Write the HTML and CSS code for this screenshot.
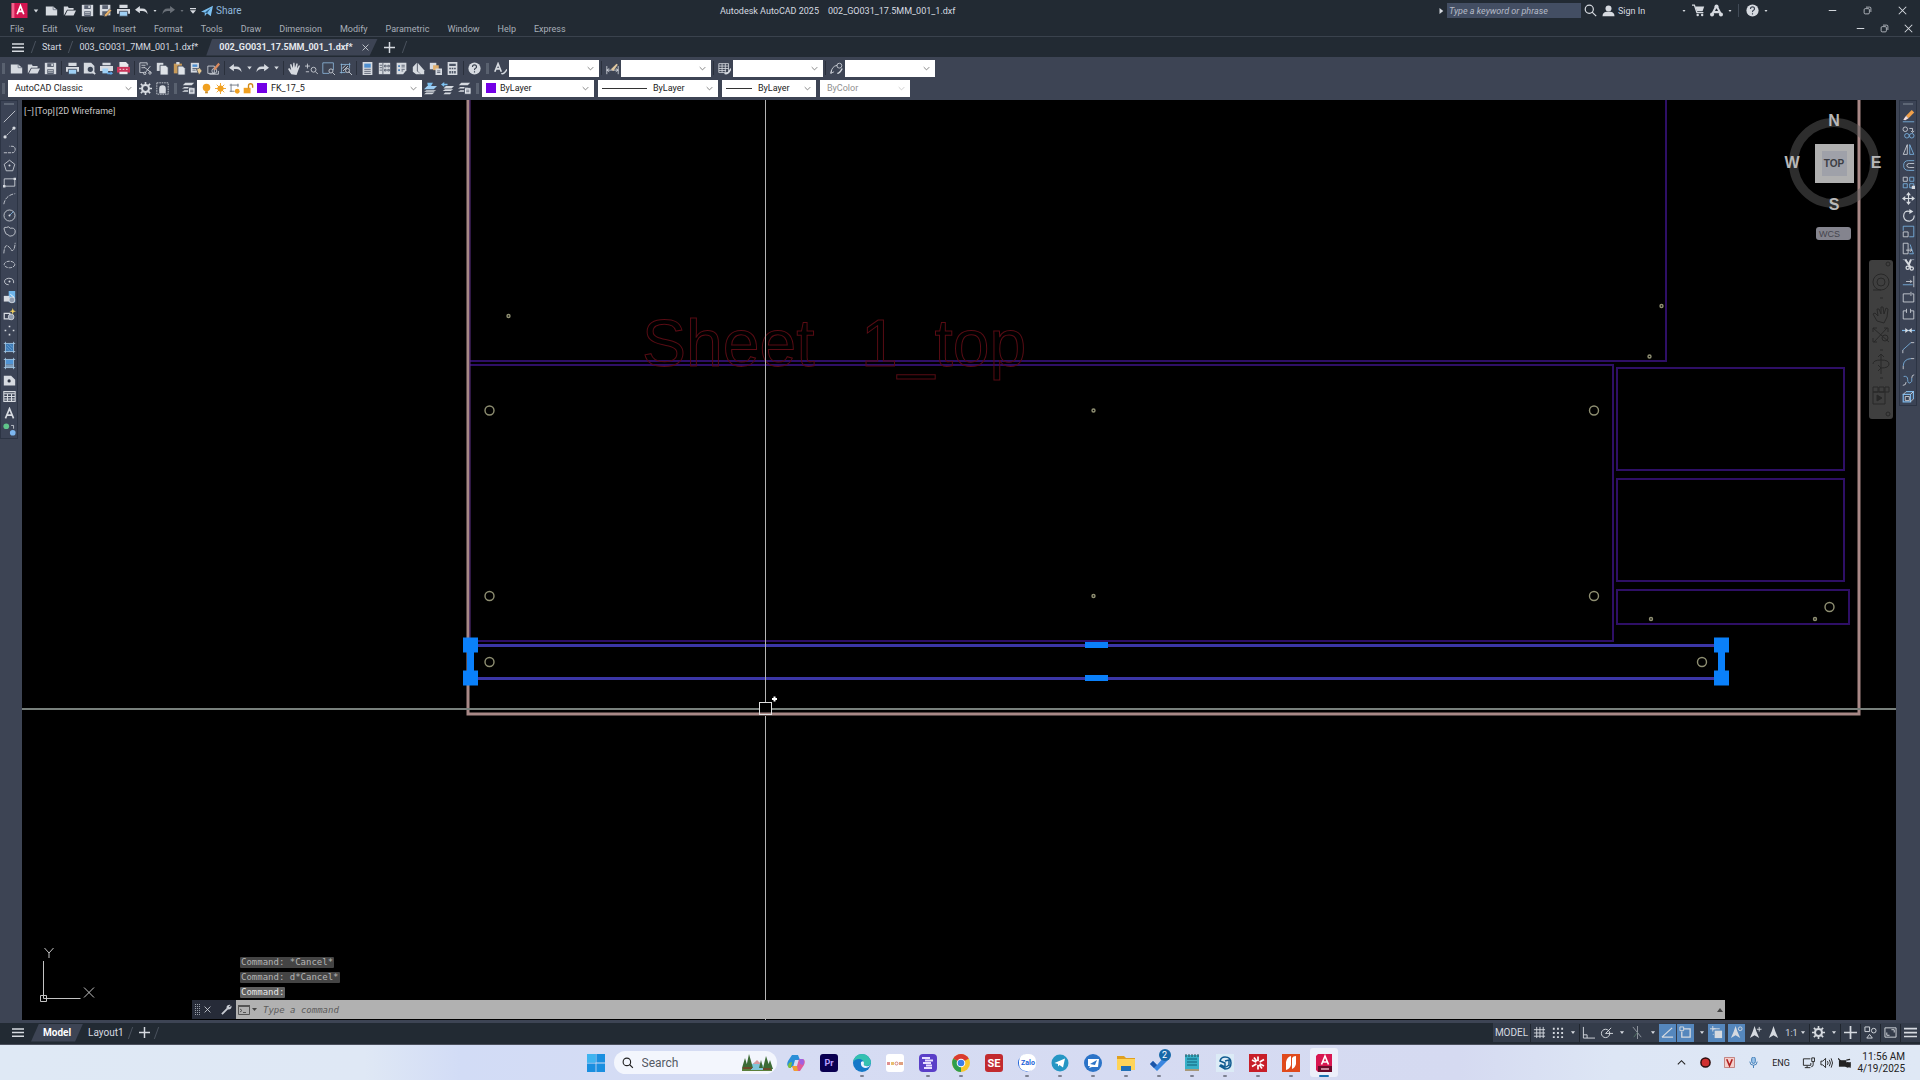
FILE: index.html
```html
<!DOCTYPE html>
<html lang="en">
<head>
  <meta charset="UTF-8">
  <meta name="viewport" content="width=device-width, initial-scale=1.0">
  <title>Autodesk AutoCAD 2025 - 002_GO031_17.5MM_001_1.dxf</title>
  <link rel="stylesheet" href="styles.css">
</head>
<body>

  <!-- Icon set -->
  <svg class="icon-defs" aria-hidden="true">
    <symbol id="i-new" viewBox="0 0 16 16"><path class="f" d="M1 3h9l5 4v7H1z"/><path d="M10 3v4h5" fill="none" stroke="#6b7383"/></symbol>
    <symbol id="i-open" viewBox="0 0 16 16"><path class="f" d="M1 14V3h5l1 2h6v2H5z"/><path class="f" d="M5.500 8H16l-3 6H2.500z"/></symbol>
    <symbol id="i-save" viewBox="0 0 16 16"><path class="f" d="M1 1h14v14H1z"/><path d="M4 1.500h8V6H4zM4 9h8v6H4z" fill="#5a6272"/><path class="f" d="M5 10h6v1H5zM5 12h6v1H5zM9 2h2v3H9z"/></symbol>
    <symbol id="i-saveas" viewBox="0 0 16 16"><path class="f" d="M1 1h13v13H1z"/><path d="M4 1.500h7V6H4zM4 9h6v5H4z" fill="#5a6272"/><path d="M7 13l6-7 2.500 2-6 7-3 .8z" fill="#e9b36a" stroke="#30394a" stroke-width=".6"/></symbol>
    <symbol id="i-print" viewBox="0 0 16 16"><path class="f" d="M3 1h10v4H3zM0 6h16v6H0z"/><path d="M3 9h10v6H3z" fill="#9fd0f5" stroke="#3a4456"/></symbol>
    <symbol id="i-preview" viewBox="0 0 16 16"><path class="f" d="M1 1h9l4 4v9H1z"/><circle cx="9" cy="9" r="4" fill="#3b4556" stroke="#cfd5dd" stroke-width="1.500"/><path class="s" d="M12 12l3 3" stroke-width="2"/></symbol>
    <symbol id="i-publish" viewBox="0 0 16 16"><path class="f" d="M3 1h10v3H3zM0 5h16v6H0z"/><path d="M3 8h7v6H3z" fill="#9fd0f5"/><path d="M9 13h4v-2l3 3-3 2v-1H9z" fill="#61a8e8"/></symbol>
    <symbol id="i-pdf" viewBox="0 0 16 16"><path d="M3 0h8l3 3v4H3z" fill="#e8e8ec"/><path d="M0 6h16v7H0z" fill="#c8355a"/><path d="M3 12h10v3H3z" fill="#e8e8ec"/><path d="M3 9h2M7 9h2M11 9h2" stroke="#fff"/></symbol>
    <symbol id="i-cut" viewBox="0 0 16 16"><path d="M1 1h9v3M1 1v12h5" class="s"/><path class="s" d="M3 4h5M3 7h4M6 6l9 7M14 5l-7 9"/><circle class="s" cx="13.500" cy="13.500" r="1.500"/><circle class="s" cx="7" cy="14" r="1.500"/></symbol>
    <symbol id="i-copy" viewBox="0 0 16 16"><path class="f" d="M1 1h8v10H1z"/><path d="M5 4h7l3 3v9H5z" fill="#dfe3e8" stroke="#3b4556"/></symbol>
    <symbol id="i-paste" viewBox="0 0 16 16"><path d="M1 2h10v12H1z" fill="#c89a58"/><path class="f" d="M4 0h4v3H4z"/><path d="M6 5h6l3 3v8H6z" fill="#dfe3e8" stroke="#3b4556"/></symbol>
    <symbol id="i-match" viewBox="0 0 16 16"><path class="f" d="M1 1h10v12H1z"/><path d="M3 3h6v3H3z" fill="#4f8fd0"/><path d="M3 8h6M3 10h4" stroke="#4a5364"/><path d="M8 9l4-2 3 4-4 5z" fill="#e8c890" stroke="#3b4556"/></symbol>
    <symbol id="i-block" viewBox="0 0 16 16"><path class="s" d="M1 5h8v9H1zM3 15h11v-4"/><circle class="s" cx="9" cy="11" r="3"/><path d="M8 8l6-7 2 2-6 7z" fill="#d98a5e"/></symbol>
    <symbol id="i-undo" viewBox="0 0 16 16"><path class="f" d="M0 7l6-4.500v3h3q6 0 6.500 7-2.500-4-6.500-4H6v3z"/></symbol>
    <symbol id="i-redo" viewBox="0 0 16 16"><path class="f" d="M16 7l-6-4.500v3H7Q1 5.500.5 12.500q2.500-4 6.500-4h3v3z"/></symbol>
    <symbol id="i-caret" viewBox="0 0 8 16"><path class="f" d="M1 6h6l-3 4z"/></symbol>
    <symbol id="i-more" viewBox="0 0 8 16"><path class="f" d="M0 4h8v1.500H0zM0 7h8l-4 4.500z"/></symbol>
    <symbol id="i-send" viewBox="0 0 16 16"><path d="M0 9l16-8-3 14-5-4-3 4v-5z" fill="#7cc0f0"/><path d="M5 10l8-6-5 7z" fill="#2a5f8c"/></symbol>
    <symbol id="i-pan" viewBox="0 0 16 16"><path class="f" d="M4 15L0 8.500l1.500-1L4 10 2.500 3l1.500-.5L6 7.500 6.500 1h1.500L8.500 7l2-5.500 1.500.5-1 6 2.500-4 1.300.7L12 12l-1.500 4z"/></symbol>
    <symbol id="i-zoomrt" viewBox="0 0 16 16"><path class="s" d="M0 5h6M3 2v6M1 12h4"/><circle class="s" cx="10.500" cy="9.500" r="3"/><path class="s" d="M13 12l3 3"/></symbol>
    <symbol id="i-zoomwin" viewBox="0 0 16 16"><path d="M1 1h13v9M1 1v13h8" fill="none" stroke="#8eb9dd"/><circle class="s" cx="11" cy="11" r="2.500"/><path class="s" d="M13 13l3 3"/></symbol>
    <symbol id="i-zoomprev" viewBox="0 0 16 16"><path d="M2 3h12M3 2v12M13 1v7M1 13h7" fill="none" stroke="#8eb9dd"/><path class="s" d="M4 8l4-4M5 11l6-6"/><circle class="s" cx="10.500" cy="10.500" r="2.500"/><path class="s" d="M12 12l4 4"/></symbol>
    <symbol id="i-props" viewBox="0 0 16 16"><path class="f" d="M2 0h12v16H2z"/><path d="M4 2h8v5H4z" fill="#4f8fd0"/><path d="M4 9h8M4 11.500h8M4 14h8" stroke="#4a5364"/></symbol>
    <symbol id="i-dc" viewBox="0 0 16 16"><path class="f" d="M1 1h14v14H1z"/><path d="M6 1v14M8 4h2v2H8zM12 4h2v2h-2zM8 9h2v2H8zM12 9h2v2h-2zM2 4h3M2 7h3M2 10h3" stroke="#4a5364" fill="none"/></symbol>
    <symbol id="i-palette" viewBox="0 0 16 16"><path class="f" d="M2 1h12v9l-4 5H2z"/><path d="M4 4h2v2H4zM4 9h2v2H4z" fill="#3a73b0"/><path d="M8 4h4M8 6h4M8 9h4M8 11h2" stroke="#4a5364"/></symbol>
    <symbol id="i-sheet" viewBox="0 0 16 16"><path class="f" d="M1 6l5-5v10l5 4H5L1 12z"/><path class="f" d="M7 1l8 9v5h-4L7 11z"/></symbol>
    <symbol id="i-markup" viewBox="0 0 16 16"><path class="f" d="M1 1h8v8H1z"/><path d="M5 4h7v6H5z" fill="#e0b070"/><path class="f" d="M8 8h8v8H8z"/><path d="M10 11h4M10 13h4" stroke="#4a5364"/></symbol>
    <symbol id="i-calc" viewBox="0 0 16 16"><path class="f" d="M2 0h12v16H2z"/><path d="M4 2h8v3H4zM4 7h2v2H4zM7 7h2v2H7zM10 7h2v2h-2zM4 11h2v3H4zM7 11h2v3H7zM10 11h2v3h-2z" fill="#4a5364"/></symbol>
    <symbol id="i-help" viewBox="0 0 16 16"><circle class="f" cx="8" cy="8" r="7.500"/><path d="M5.500 6q0-2.500 2.500-2.500T10.500 6q0 1-1.300 1.800T8 10M8 11.500v1.500" fill="none" stroke="#39414f" stroke-width="1.400"/></symbol>
    <symbol id="i-textstyle" viewBox="0 0 16 16"><path class="s" d="M1 12L5 2l4 10M2.500 8.500h5" stroke-width="2"/><path class="s" d="M9 14q3 2 7-5" stroke-width="1.800"/></symbol>
    <symbol id="i-dimstyle" viewBox="0 0 16 16"><path class="s" d="M1 5v10M15 5v10M1 10h14M4 8l-3 2 3 2M12 8l3 2-3 2"/><path d="M6 9l7-7 1.500 1.500L9 11z" fill="#e0c8a0"/></symbol>
    <symbol id="i-tablestyle" viewBox="0 0 16 16"><path class="s" d="M1 2h12v11H1zM1 5h12M1 8h12M1 10.500h9M5 2v11M9 2v11"/><path class="s" d="M8 14q4 2 8-6" stroke-width="2"/></symbol>
    <symbol id="i-leader" viewBox="0 0 16 16"><path class="s" d="M1 14Q2 5 9 4M1 14l1-4M1 14l4-2"/><circle class="s" cx="11.500" cy="4.500" r="3"/><path class="s" d="M9 14q3 0 6-6" stroke-width="1.800"/></symbol>
    <symbol id="i-gear" viewBox="0 0 16 16"><circle class="s" cx="8" cy="8" r="4.300" stroke-width="2.500"/><path class="s" d="M8 0v3M8 13v3M0 8h3M13 8h3M2.300 2.300l2.200 2.200M11.500 11.500l2.200 2.200M2.300 13.700l2.200-2.200M11.500 4.500l2.200-2.200" stroke-width="2"/></symbol>
    <symbol id="i-wssave" viewBox="0 0 16 16"><path d="M1 1h14v14H1z" fill="none" stroke="#d6dae0" stroke-dasharray="2 1"/><circle class="f" cx="8" cy="8" r="4"/><path class="f" d="M4 9h8v5H4z"/></symbol>
    <symbol id="i-layers" viewBox="0 0 16 16"><path class="f" d="M4 1h11l-3 3H1zM3 6h10l-2 2H0zM3 10h6l-1 2H0z"/><path d="M8 7h8v8H8z" fill="#e6e9ee" stroke="#3b4556"/><path d="M10 10h4M10 12h4" stroke="#4a5364"/></symbol>
    <symbol id="i-laycur" viewBox="0 0 16 16"><path d="M4 1h7l-3 5H5z" fill="#7cc0f0"/><path d="M4 5h12l-4 4H0z" fill="#9cccf2"/><path class="f" d="M3 10h12l-3 2H0zM3 13h10l-3 2H0z"/></symbol>
    <symbol id="i-layprev" viewBox="0 0 16 16"><path d="M0 3l4-3v2h4v2H4v2z" fill="#7cc0f0"/><path class="f" d="M6 5h10l-3 3H3zM5 9h10l-3 2H2zM5 13h8l-2 2H3z"/></symbol>
    <symbol id="i-bulb" viewBox="0 0 16 16"><circle cx="8" cy="6.500" r="5.500" fill="#f0a020"/><path d="M6 12h4v3H6z" fill="#c88820"/></symbol>
    <symbol id="i-sun" viewBox="0 0 16 16"><circle cx="8" cy="8" r="4.500" fill="#f0a020"/><path d="M8 0v16M0 8h16M2.500 2.500l11 11M13.500 2.500l-11 11" stroke="#f0a020" stroke-width="1.300"/></symbol>
    <symbol id="i-vpfreeze" viewBox="0 0 16 16"><path d="M3 1v12M1 3h13M13 1v5M1 12h7" fill="none" stroke="#6c7480" stroke-width="1.300"/><circle cx="12" cy="12" r="3.500" fill="#f0a020"/></symbol>
    <symbol id="i-unlock" viewBox="0 0 16 16"><path d="M1 7h10v8H1z" fill="#f0a020"/><path d="M8 8V4q0-3 3-3t3 3v3" fill="none" stroke="#d08a18" stroke-width="2"/></symbol>
    <symbol id="i-chevron" viewBox="0 0 10 6"><path d="M1 1l4 4 4-4" fill="none" stroke="currentColor"/></symbol>
    <symbol id="i-close" viewBox="0 0 12 12"><path class="s" d="M1 1l10 10M11 1L1 11" stroke-width="1.400"/></symbol>
    <symbol id="i-min" viewBox="0 0 12 12"><path class="s" d="M1 6h10" stroke-width="1.300"/></symbol>
    <symbol id="i-restore" viewBox="0 0 12 12"><rect class="s" x="1.500" y="3.500" width="7" height="7" rx="1.500"/><path class="s" d="M4 1.500h5q1.500 0 1.500 1.500v5"/></symbol>
    <symbol id="i-burger" viewBox="0 0 14 12"><path class="f" d="M0 1h14v1.800H0zM0 5.200h14V7H0zM0 9.400h14v1.800H0z"/></symbol>
    <symbol id="i-plus" viewBox="0 0 12 12"><path class="s" d="M6 0v12M0 6h12" stroke-width="1.600"/></symbol>
    <symbol id="i-search" viewBox="0 0 16 16"><circle class="s" cx="6.500" cy="6.500" r="5" stroke-width="1.500"/><path class="s" d="M10 10l5 5" stroke-width="1.500"/></symbol>
    <symbol id="i-user" viewBox="0 0 16 16"><circle class="f" cx="8" cy="4.500" r="4"/><path class="f" d="M0 15q0-5 5-6h6q5 1 5 6z"/></symbol>
    <symbol id="i-cart" viewBox="0 0 16 16"><path class="s" d="M0 1.500h3l3 9h8" stroke-width="1.500"/><path class="f" d="M4 3h11l-2 6H6z"/><circle class="f" cx="7" cy="13.500" r="1.500"/><circle class="f" cx="12.500" cy="13.500" r="1.500"/></symbol>
    <symbol id="i-apps" viewBox="0 0 16 16"><path class="s" d="M8 2L2.500 13M8 2l5.500 11M4 10h8" stroke-width="2.600"/><circle class="f" cx="8" cy="3" r="2.500"/><circle class="f" cx="2.500" cy="13" r="2.500"/><circle class="f" cx="13.500" cy="13" r="2.500"/></symbol>

    <!-- Draw toolbar -->
    <symbol id="d-line" viewBox="0 0 16 16"><path class="s" d="M1 15L15 1"/></symbol>
    <symbol id="d-xline" viewBox="0 0 16 16"><path class="s" d="M2 14L14 2" stroke-dasharray="3 1"/><circle class="f" cx="2.500" cy="13.500" r="2"/><circle class="f" cx="13.500" cy="2.500" r="2"/></symbol>
    <symbol id="d-pline" viewBox="0 0 16 16"><path class="s" d="M1 12h10q4 0 4-4t-4-4H8" stroke-dasharray="4 1"/></symbol>
    <symbol id="d-polygon" viewBox="0 0 16 16"><path class="s" d="M8 1.500l6.500 5-2.500 8H4l-2.500-8z"/><circle class="f" cx="8" cy="8" r="1.200"/></symbol>
    <symbol id="d-rect" viewBox="0 0 16 16"><path class="s" d="M1.500 3.500h13v9h-13z"/><path class="f" d="M0 11h3v3H0zM13 2h3v3h-3z"/></symbol>
    <symbol id="d-arc" viewBox="0 0 16 16"><path class="s" d="M1 15Q3 4 15 2" stroke-dasharray="5 1.500"/></symbol>
    <symbol id="d-circle" viewBox="0 0 16 16"><circle class="s" cx="8" cy="8" r="6.800"/><path d="M8 8l5-5" stroke="#7db7e8" fill="none"/><circle class="f" cx="8" cy="8" r="1.200"/></symbol>
    <symbol id="d-cloud" viewBox="0 0 16 16"><path class="s" d="M2 7Q0 2 4 3q3-2 5 1 5-1 6 3 1 4-3 6-4 2-6-1-3 0-4-5z"/></symbol>
    <symbol id="d-spline" viewBox="0 0 16 16"><path class="s" d="M1 14Q2 2 6 5t4 5q4 3 5-9" stroke-dasharray="5 1"/></symbol>
    <symbol id="d-ellipse" viewBox="0 0 16 16"><ellipse class="s" cx="8" cy="8" rx="6.500" ry="4" stroke-dasharray="4 1.200"/></symbol>
    <symbol id="d-earc" viewBox="0 0 16 16"><path class="s" d="M13 10q1-6-6-6-6 1-5 5 1 3 5 3"/><circle class="f" cx="8" cy="8" r="1.200"/></symbol>
    <symbol id="d-insert" viewBox="0 0 16 16"><path d="M7 0h8v14H7z" fill="#6fb5ea"/><path class="f" d="M1 6h7v7H1z"/><circle cx="11" cy="11" r="3.500" fill="#8f9aac" stroke="#d6dae0"/><path d="M9 4l5 4" stroke="#fff"/></symbol>
    <symbol id="d-mkblock" viewBox="0 0 16 16"><path class="s" d="M1.500 6.500h7v7h-7z" stroke-width="1.500"/><circle cx="10" cy="11" r="3.500" fill="#8f9aac" stroke="#d6dae0"/><path d="M12 0l1 3 3 1-3 1-1 3-1-3-3-1 3-1z" fill="#f0d060"/></symbol>
    <symbol id="d-point" viewBox="0 0 16 16"><path class="f" d="M7 2h2v2H7zM7 12h2v2H7zM2 7h2v2H2zM12 7h2v2h-2z"/></symbol>
    <symbol id="d-hatch" viewBox="0 0 16 16"><path d="M3 3h10v10H3z" fill="#3b79b5"/><path d="M1 3h14M1 13h14M3 1v14M13 1v14" stroke="#a9cdea"/><path d="M5 5l6 6M8 4l4 4M4 8l4 4" stroke="#6f9fcc"/></symbol>
    <symbol id="d-gradient" viewBox="0 0 16 16"><path d="M3 3h10v6H3z" fill="#4f93d4"/><path d="M3 9h10v4H3z" fill="#7d9bb8"/><path d="M1 3h14M1 13h14M3 1v14M13 1v14" stroke="#a9cdea"/></symbol>
    <symbol id="d-region" viewBox="0 0 16 16"><path class="f" d="M1 2h9l5 5v7H1z"/><circle cx="7.500" cy="8.500" r="2" fill="#2b3240"/></symbol>
    <symbol id="d-table" viewBox="0 0 16 16"><path class="s" d="M1 2h14v12H1zM1 4.500h14M1 8h14M1 11h14M5.500 5v9M10.500 5v9" stroke-width="1.300"/></symbol>
    <symbol id="d-text" viewBox="0 0 16 16"><path class="s" d="M3 14L8 2l5 12M5 10h6" stroke-width="2"/></symbol>
    <symbol id="d-select" viewBox="0 0 16 16"><circle cx="4" cy="4" r="3.500" fill="#5fc48a"/><circle cx="12" cy="12" r="3.500" fill="#7db7f0"/><path class="s" d="M10 3h3v4"/></symbol>

    <!-- Modify toolbar -->
    <symbol id="m-erase" viewBox="0 0 16 16"><path d="M5 7L12 0l3 3-7 7z" fill="#f0a04a"/><path d="M5 7l3 3-4 2.500L1.500 12z" fill="#f4dede"/><path d="M1 14.500h14" stroke="#7db7e8"/></symbol>
    <symbol id="m-copy" viewBox="0 0 16 16"><circle class="s" cx="4" cy="4" r="2.800"/><path class="s" d="M9 3h4v4M11 6l2 2 2-2"/><circle class="b" cx="6" cy="12" r="2.800"/><circle class="b" cx="12" cy="12" r="2.800"/></symbol>
    <symbol id="m-mirror" viewBox="0 0 16 16"><path class="s" d="M6.500 2v12h-5z"/><path class="b" d="M9.500 2v12h5z"/></symbol>
    <symbol id="m-offset" viewBox="0 0 16 16"><path class="b" d="M15 2H8Q2 2 2 8t6 6h7"/><path class="s" d="M15 5.500H9q-3 0-3 2.500t3 2.500h6"/></symbol>
    <symbol id="m-array" viewBox="0 0 16 16"><path class="s" d="M1.500 1.500h5v5h-5z"/><path class="b" d="M9.500 1.500h5v5h-5zM1.500 9.500h5v5h-5zM9.500 9.500h5v5h-5z"/><path class="f" d="M12 12h4v4h-4z"/></symbol>
    <symbol id="m-move" viewBox="0 0 16 16"><path class="s" d="M8 2v12M2 8h12" stroke-width="1.400"/><path class="f" d="M8 0l3 4H5zM8 16l3-4H5zM0 8l4-3v6zM16 8l-4-3v6z"/></symbol>
    <symbol id="m-rotate" viewBox="0 0 16 16"><path class="s" d="M10 3q-8-2-8 6 1 6 7 6 6-1 6-7" stroke-width="1.400"/><path class="f" d="M9 0l5 3-5 3z"/></symbol>
    <symbol id="m-scale" viewBox="0 0 16 16"><path class="b" d="M1.500 7V1.500h13v13H9"/><path class="s" d="M1.500 8.500h6v6h-6z"/></symbol>
    <symbol id="m-stretch" viewBox="0 0 16 16"><path class="s" d="M1.500 1.500h6v13h-6z"/><path class="b" d="M10 3l4 11.500H9"/><path class="s" d="M5 10h7M10 8l2 2-2 2"/></symbol>
    <symbol id="m-trim" viewBox="0 0 16 16"><path d="M1 2h5M10 2h5" stroke="#9aa5b5"/><path class="s" d="M4 2l7 10M11 2L8 9" stroke-width="2.400"/><circle class="s" cx="12" cy="13" r="2" stroke-width="1.600"/><circle class="s" cx="7" cy="12" r="2" stroke-width="1.600"/></symbol>
    <symbol id="m-extend" viewBox="0 0 16 16"><path class="s" d="M14.500 1v14M5 8h7M10 6l2 2-2 2"/><path class="b" d="M1 12h12"/></symbol>
    <symbol id="m-breakpt" viewBox="0 0 16 16"><path class="s" d="M10 3.500H1.500v10h13V3.500H12M11 1v5"/></symbol>
    <symbol id="m-break" viewBox="0 0 16 16"><path class="s" d="M5 3.500H1.500v10h13V3.500H11M5.500 1v5M10.500 1v5"/></symbol>
    <symbol id="m-join" viewBox="0 0 16 16"><path class="b" d="M0 8h16" stroke-width="1.500"/><path class="f" d="M4 5l4 3-4 3zM12 5L8 8l4 3z"/></symbol>
    <symbol id="m-chamfer" viewBox="0 0 16 16"><path class="s" d="M1 15V11M11 2h4"/><path class="b" d="M1 11l10-9"/></symbol>
    <symbol id="m-fillet" viewBox="0 0 16 16"><path class="s" d="M1.500 15V11M11 2h4"/><path class="b" d="M1.500 11Q2 2.500 11 2"/></symbol>
    <symbol id="m-blend" viewBox="0 0 16 16"><path class="s" d="M1 14q4 0 4-4M12 5q0-4 3-4"/><path class="b" d="M2 3q5-1 5 4t3 4q3-1 2-6"/></symbol>
    <symbol id="m-explode" viewBox="0 0 16 16"><path class="b" d="M1.500 5.500h9v9h-9zM5 2h9v9" stroke-width="1.500"/><path class="s" d="M4 8h5v5H4zM1.500 5.500L5 2M10.500 5.500L14 2M10.500 14.500L14 11"/></symbol>
  </svg>

  <!-- Title bar -->
  <header class="title-bar">
    <div class="quick-access">
      <button class="app-button" aria-label="Application menu">
        <svg viewBox="0 0 18 16"><path d="M0 0h17v16H0z" fill="#d31550"/><path d="M0 0h3v16H0z" fill="#f0648c"/><path d="M6 12L9.500 3l3.500 9M7.500 9h4" fill="none" stroke="#fff" stroke-width="1.800"/></svg>
      </button>
      <button class="drop" aria-label="Open application menu"><svg><use href="#i-caret"/></svg></button>
      <button class="tool" aria-label="New"><svg><use href="#i-new"/></svg></button>
      <button class="tool" aria-label="Open"><svg><use href="#i-open"/></svg></button>
      <button class="tool" aria-label="Save"><svg><use href="#i-save"/></svg></button>
      <button class="tool" aria-label="Save As"><svg><use href="#i-saveas"/></svg></button>
      <button class="tool" aria-label="Plot"><svg><use href="#i-print"/></svg></button>
      <button class="tool" aria-label="Undo"><svg><use href="#i-undo"/></svg></button>
      <button class="drop small" aria-label="Undo list"><svg><use href="#i-caret"/></svg></button>
      <button class="tool dim" aria-label="Redo"><svg><use href="#i-redo"/></svg></button>
      <button class="drop small dim" aria-label="Redo list"><svg><use href="#i-caret"/></svg></button>
      <button class="drop wide" aria-label="Customize"><svg><use href="#i-more"/></svg></button>
      <button class="share"><svg><use href="#i-send"/></svg>Share</button>
    </div>
    <div class="title-text"><span>Autodesk AutoCAD 2025</span><span>002_GO031_17.5MM_001_1.dxf</span></div>
    <div class="info-center">
      <button class="drop side-arrow" aria-label="Collapse"><svg viewBox="0 0 8 16"><path class="f" d="M2 4l5 4-5 4z"/></svg></button>
      <input class="info-search" type="text" placeholder="Type a keyword or phrase" aria-label="Search help">
      <button class="tool" aria-label="Search"><svg><use href="#i-search"/></svg></button>
      <button class="sign-in"><svg><use href="#i-user"/></svg>Sign In<svg class="tiny"><use href="#i-caret"/></svg></button>
      <button class="tool" aria-label="App Store"><svg><use href="#i-cart"/></svg></button>
      <button class="tool" aria-label="Autodesk apps"><svg><use href="#i-apps"/></svg></button>
      <button class="drop small" aria-label="Apps list"><svg><use href="#i-caret"/></svg></button>
      <span class="bar"></span>
      <button class="tool" aria-label="Help"><svg><use href="#i-help"/></svg></button>
      <button class="drop small" aria-label="Help list"><svg><use href="#i-caret"/></svg></button>
      <div class="window-buttons">
        <button aria-label="Minimize"><svg><use href="#i-min"/></svg></button>
        <button aria-label="Restore"><svg><use href="#i-restore"/></svg></button>
        <button aria-label="Close"><svg><use href="#i-close"/></svg></button>
      </div>
    </div>
  </header>

  <!-- Menu bar -->
  <nav class="menu-bar">
    <button>File</button>
    <button>Edit</button>
    <button>View</button>
    <button>Insert</button>
    <button>Format</button>
    <button>Tools</button>
    <button>Draw</button>
    <button>Dimension</button>
    <button>Modify</button>
    <button>Parametric</button>
    <button>Window</button>
    <button>Help</button>
    <button>Express</button>
    <div class="doc-buttons">
      <button aria-label="Minimize drawing"><svg><use href="#i-min"/></svg></button>
      <button aria-label="Restore drawing"><svg><use href="#i-restore"/></svg></button>
      <button aria-label="Close drawing"><svg><use href="#i-close"/></svg></button>
    </div>
  </nav>

  <!-- File tabs -->
  <div class="file-tabs">
    <button class="burger" aria-label="Drawings"><svg><use href="#i-burger"/></svg></button>
    <span class="slash"></span>
    <button class="file-tab">Start</button>
    <span class="slash"></span>
    <button class="file-tab">003_GO031_7MM_001_1.dxf*</button>
    <div class="file-tab-active">
      <button class="file-tab">002_GO031_17.5MM_001_1.dxf*</button>
      <button class="tab-close" aria-label="Close tab"><svg><use href="#i-close"/></svg></button>
    </div>
    <button class="tab-add" aria-label="New tab"><svg><use href="#i-plus"/></svg></button>
    <span class="slash"></span>
  </div>

  <!-- Toolbars -->
  <div class="toolbars">
    <div class="toolbar">
      <span class="grip"></span>
      <button class="btn" aria-label="New"><svg><use href="#i-new"/></svg></button>
      <button class="btn" aria-label="Open"><svg><use href="#i-open"/></svg></button>
      <button class="btn" aria-label="Save"><svg><use href="#i-save"/></svg></button>
      <span class="sep"></span>
      <button class="btn" aria-label="Plot"><svg><use href="#i-print"/></svg></button>
      <button class="btn" aria-label="Plot Preview"><svg><use href="#i-preview"/></svg></button>
      <button class="btn" aria-label="Publish"><svg><use href="#i-publish"/></svg></button>
      <button class="btn" aria-label="3D Print"><svg><use href="#i-pdf"/></svg></button>
      <span class="sep"></span>
      <button class="btn" aria-label="Cut"><svg><use href="#i-cut"/></svg></button>
      <button class="btn" aria-label="Copy"><svg><use href="#i-copy"/></svg></button>
      <button class="btn" aria-label="Paste"><svg><use href="#i-paste"/></svg></button>
      <button class="btn" aria-label="Match Properties"><svg><use href="#i-match"/></svg></button>
      <button class="btn" aria-label="Block Editor"><svg><use href="#i-block"/></svg></button>
      <span class="sep"></span>
      <button class="btn" aria-label="Undo"><svg><use href="#i-undo"/></svg></button>
      <button class="btn-drop" aria-label="Undo list"><svg><use href="#i-caret"/></svg></button>
      <button class="btn" aria-label="Redo"><svg><use href="#i-redo"/></svg></button>
      <button class="btn-drop" aria-label="Redo list"><svg><use href="#i-caret"/></svg></button>
      <span class="sep"></span>
      <button class="btn" aria-label="Pan"><svg><use href="#i-pan"/></svg></button>
      <button class="btn" aria-label="Zoom Realtime"><svg><use href="#i-zoomrt"/></svg></button>
      <button class="btn" aria-label="Zoom Window"><svg><use href="#i-zoomwin"/></svg></button>
      <button class="btn" aria-label="Zoom Previous"><svg><use href="#i-zoomprev"/></svg></button>
      <span class="sep"></span>
      <button class="btn" aria-label="Properties"><svg><use href="#i-props"/></svg></button>
      <button class="btn" aria-label="DesignCenter"><svg><use href="#i-dc"/></svg></button>
      <button class="btn" aria-label="Tool Palettes"><svg><use href="#i-palette"/></svg></button>
      <button class="btn" aria-label="Sheet Set Manager"><svg><use href="#i-sheet"/></svg></button>
      <button class="btn" aria-label="Markup Set Manager"><svg><use href="#i-markup"/></svg></button>
      <button class="btn" aria-label="QuickCalc"><svg><use href="#i-calc"/></svg></button>
      <span class="sep"></span>
      <button class="btn" aria-label="Help"><svg><use href="#i-help"/></svg></button>
      <span class="grip"></span>
      <button class="btn" aria-label="Text Style"><svg><use href="#i-textstyle"/></svg></button>
      <div class="combo w-style"><select aria-label="Text style"><option></option></select><svg class="arrow"><use href="#i-chevron"/></svg></div>
      <span class="sep"></span>
      <button class="btn" aria-label="Dimension Style"><svg><use href="#i-dimstyle"/></svg></button>
      <div class="combo w-style"><select aria-label="Dimension style"><option></option></select><svg class="arrow"><use href="#i-chevron"/></svg></div>
      <span class="sep"></span>
      <button class="btn" aria-label="Table Style"><svg><use href="#i-tablestyle"/></svg></button>
      <div class="combo w-style"><select aria-label="Table style"><option></option></select><svg class="arrow"><use href="#i-chevron"/></svg></div>
      <span class="sep"></span>
      <button class="btn" aria-label="Multileader Style"><svg><use href="#i-leader"/></svg></button>
      <div class="combo w-style"><select aria-label="Multileader style"><option></option></select><svg class="arrow"><use href="#i-chevron"/></svg></div>
    </div>

    <div class="toolbar">
      <span class="grip"></span>
      <div class="combo w-workspace"><select class="indent" aria-label="Workspace"><option>AutoCAD Classic</option></select><svg class="arrow"><use href="#i-chevron"/></svg></div>
      <button class="btn" aria-label="Workspace Settings"><svg><use href="#i-gear"/></svg></button>
      <button class="btn" aria-label="My Workspace"><svg><use href="#i-wssave"/></svg></button>
      <span class="grip"></span>
      <button class="btn" aria-label="Layer Properties"><svg><use href="#i-layers"/></svg></button>
      <div class="combo w-layer">
        <svg class="state"><use href="#i-bulb"/></svg>
        <svg class="state"><use href="#i-sun"/></svg>
        <svg class="state"><use href="#i-vpfreeze"/></svg>
        <svg class="state"><use href="#i-unlock"/></svg>
        <span class="swatch"></span>
        <select aria-label="Layer"><option>FK_17_5</option></select><svg class="arrow"><use href="#i-chevron"/></svg>
      </div>
      <button class="btn" aria-label="Make Object's Layer Current"><svg><use href="#i-laycur"/></svg></button>
      <button class="btn" aria-label="Layer Previous"><svg><use href="#i-layprev"/></svg></button>
      <button class="btn" aria-label="Layer States Manager"><svg><use href="#i-layers"/></svg></button>
      <span class="grip"></span>
      <div class="combo w-color gap"><span class="swatch"></span><select aria-label="Color"><option>ByLayer</option></select><svg class="arrow"><use href="#i-chevron"/></svg></div>
      <div class="combo w-ltype gap"><span class="sample long"></span><select aria-label="Linetype"><option>ByLayer</option></select><svg class="arrow"><use href="#i-chevron"/></svg></div>
      <div class="combo w-lweight gap"><span class="sample"></span><select aria-label="Lineweight"><option>ByLayer</option></select><svg class="arrow"><use href="#i-chevron"/></svg></div>
      <div class="combo w-style off"><select class="indent" aria-label="Plot style" disabled><option>ByColor</option></select><svg class="arrow"><use href="#i-chevron"/></svg></div>
    </div>
  </div>

  <!-- Drawing area with side toolbars -->
  <main class="workspace">
    <aside class="side side-left">
      <div class="side-bar draw-bar">
        <button aria-label="Line"><svg><use href="#d-line"/></svg></button>
        <button aria-label="Construction Line"><svg><use href="#d-xline"/></svg></button>
        <button aria-label="Polyline"><svg><use href="#d-pline"/></svg></button>
        <button aria-label="Polygon"><svg><use href="#d-polygon"/></svg></button>
        <button aria-label="Rectangle"><svg><use href="#d-rect"/></svg></button>
        <button aria-label="Arc"><svg><use href="#d-arc"/></svg></button>
        <button aria-label="Circle"><svg><use href="#d-circle"/></svg></button>
        <button aria-label="Revision Cloud"><svg><use href="#d-cloud"/></svg></button>
        <button aria-label="Spline"><svg><use href="#d-spline"/></svg></button>
        <button aria-label="Ellipse"><svg><use href="#d-ellipse"/></svg></button>
        <button aria-label="Ellipse Arc"><svg><use href="#d-earc"/></svg></button>
        <button aria-label="Insert Block"><svg><use href="#d-insert"/></svg></button>
        <button aria-label="Make Block"><svg><use href="#d-mkblock"/></svg></button>
        <button aria-label="Point"><svg><use href="#d-point"/></svg></button>
        <button aria-label="Hatch"><svg><use href="#d-hatch"/></svg></button>
        <button aria-label="Gradient"><svg><use href="#d-gradient"/></svg></button>
        <button aria-label="Region"><svg><use href="#d-region"/></svg></button>
        <button aria-label="Table"><svg><use href="#d-table"/></svg></button>
        <button aria-label="Multiline Text"><svg><use href="#d-text"/></svg></button>
        <button aria-label="Add Selected"><svg><use href="#d-select"/></svg></button>
      </div>
    </aside>

    <section class="canvas">
      <svg class="drawing" viewBox="22 100 1874 920" preserveAspectRatio="xMinYMin slice">
        <!-- sheet outline -->
        <path class="sheet" d="M468 90V714H1859V90"/>
        <!-- parts -->
        <g class="part">
          <path d="M470 361H1666V90"/>
          <path d="M470 365H1613V641H470"/>
          <rect x="1617" y="368" width="227" height="102"/>
          <rect x="1617" y="479" width="227" height="102"/>
          <rect x="1617" y="590" width="232" height="34"/>
        </g>
        <path class="part-edge" d="M470 90V641"/>
        <text class="sheet-name" x="642" y="366">Sheet</text>
        <text class="sheet-name" x="861" y="366">1_top</text>
        <!-- drill holes -->
        <g class="hole">
          <circle cx="489.500" cy="410.500" r="4.500"/><circle cx="489.500" cy="596" r="4.500"/><circle cx="489.500" cy="662" r="4.500"/>
          <circle cx="1594" cy="410.500" r="4.500"/><circle cx="1594" cy="596" r="4.500"/><circle cx="1702" cy="662" r="4.500"/>
          <circle cx="1829.500" cy="607" r="4.500"/>
          <circle cx="508.500" cy="316" r="1.500"/><circle cx="1661.500" cy="306" r="1.500"/><circle cx="1649.500" cy="356.500" r="1.500"/>
          <circle cx="1093.500" cy="410.500" r="1.500"/><circle cx="1093.500" cy="596" r="1.500"/>
          <circle cx="1651" cy="619" r="1.500"/><circle cx="1815" cy="619" r="1.500"/>
        </g>
        <!-- selected polyline and its grips -->
        <path class="selected" d="M470 645.500H1721M470 678.500H1721"/>
        <g class="grips">
          <path d="M467 645h7v33h-7zM1718 645h7v33h-7z"/>
          <path d="M463 637.500h15v15h-15zM463 670.500h15v15h-15zM1714 637.500h15v15h-15zM1714 670.500h15v15h-15z"/>
          <path d="M1085 642h23v6h-23zM1085 675h23v6h-23z"/>
        </g>
        <!-- crosshair -->
        <path class="cross-h" d="M22 709H759M772 709H1896"/>
        <path class="cross-v" d="M765.500 100V702M765.500 716V1020"/>
        <rect class="pick" x="759.500" y="702.500" width="12" height="12"/>
        <path d="M772 699h5M774.500 696.500v5" stroke="#fff" stroke-width="2"/>
        <!-- UCS icon -->
        <g class="ucs">
          <path d="M43.500 961V998.500H80.500M40.500 995.500h6v6h-6z"/>
          <path d="M44.500 948l4.500 5v5M53.500 948l-4.500 5M84 987.500l10 10M94 987.500l-10 10"/>
        </g>
      </svg>

      <div class="view-label"><button>[−]</button><button>[Top]</button><button>[2D Wireframe]</button></div>

      <div class="view-cube">
        <span class="north">N</span>
        <span class="west">W</span>
        <button class="cube-face"><span>TOP</span></button>
        <span class="east">E</span>
        <span class="south">S</span>
      </div>
      <button class="wcs">WCS</button>

      <div class="nav-bar">
        <svg viewBox="0 0 24 158" fill="none" stroke="#282828">
          <circle cx="19" cy="4" r="2"/>
          <circle cx="12" cy="22" r="8"/><circle cx="12" cy="22" r="4"/><path d="M4 30h8"/><path d="M11 38h3"/>
          <path d="M8 61l-4-7 2-1 3 3-1-7 2 0 2 5 0-7 2 0 1 7 2-6 2 1-1 8-3 6z"/>
          <path d="M4 68l16 14M18 68L5 82M4 72v-4h4M4 78v4h4M15 68h4v4"/><circle cx="16" cy="78" r="3"/><path d="M11 90h3"/>
          <path d="M12 94v20M9 97l3-3 3 3M4 104q0-4 8-4t8 4-8 4M9 105l3 3-3 3"/><path d="M11 118h3"/>
          <path d="M4 127h5v5H4zM10 127h5v5h-5zM16 127h4v5h-4zM4 132h12v12H4z"/><path d="M8 135l5 3-5 3z" fill="#282828"/>
          <circle cx="19" cy="154" r="2"/>
        </svg>
      </div>

      <!-- Command line -->
      <div class="command">
        <div class="command-log">
          <span class="older">Command: *Cancel*</span>
          <span class="older">Command: d*Cancel*</span>
          <span>Command:</span>
        </div>
        <div class="command-bar">
          <div class="command-tools">
            <span class="dots"></span>
            <button class="command-close" aria-label="Close command line"><svg><use href="#i-close"/></svg></button>
            <button class="command-custom" aria-label="Customize"><svg viewBox="0 0 12 12"><path d="M1 11l6-6" stroke="#c8ccd4" stroke-width="2"/><path d="M10.500 1L8.500 3l.5.500L11.500 2q.5 4-3.500 4-2.500-.5-2-3Q7 .5 10.500 1z" fill="#c8ccd4"/></svg></button>
          </div>
          <label class="command-input">
            <svg class="prompt" viewBox="0 0 20 12"><path d="M.5 1.500h11v9H.5z" fill="none" stroke="#555"/><path d="M0 1h12v2H0z" fill="#555"/><path d="M2 5l2 1.500L2 8M5 8.500h3" fill="none" stroke="#555"/><path d="M14 4h5l-2.500 3z" fill="#444"/></svg>
            <input type="text" placeholder="Type a command" aria-label="Command">
            <svg class="up" viewBox="0 0 8 6"><path d="M1 5h6L4 1z" fill="#444"/></svg>
          </label>
        </div>
      </div>
    </section>

    <aside class="side side-right">
      <div class="side-bar modify-bar">
        <button aria-label="Erase"><svg><use href="#m-erase"/></svg></button>
        <button aria-label="Copy"><svg><use href="#m-copy"/></svg></button>
        <button aria-label="Mirror"><svg><use href="#m-mirror"/></svg></button>
        <button aria-label="Offset"><svg><use href="#m-offset"/></svg></button>
        <button aria-label="Array"><svg><use href="#m-array"/></svg></button>
        <button aria-label="Move"><svg><use href="#m-move"/></svg></button>
        <button aria-label="Rotate"><svg><use href="#m-rotate"/></svg></button>
        <button aria-label="Scale"><svg><use href="#m-scale"/></svg></button>
        <button aria-label="Stretch"><svg><use href="#m-stretch"/></svg></button>
        <button aria-label="Trim"><svg><use href="#m-trim"/></svg></button>
        <button aria-label="Extend"><svg><use href="#m-extend"/></svg></button>
        <button aria-label="Break at Point"><svg><use href="#m-breakpt"/></svg></button>
        <button aria-label="Break"><svg><use href="#m-break"/></svg></button>
        <button aria-label="Join"><svg><use href="#m-join"/></svg></button>
        <button aria-label="Chamfer"><svg><use href="#m-chamfer"/></svg></button>
        <button aria-label="Fillet"><svg><use href="#m-fillet"/></svg></button>
        <button aria-label="Blend Curves"><svg><use href="#m-blend"/></svg></button>
        <button aria-label="Explode"><svg><use href="#m-explode"/></svg></button>
      </div>
    </aside>
  </main>

  <!-- Layout tabs and status bar -->
  <div class="status-bar">
    <div class="layout-tabs">
      <button class="burger" aria-label="Layouts"><svg><use href="#i-burger"/></svg></button>
      <button class="layout-tab current">Model</button>
      <button class="layout-tab">Layout1</button>
      <span class="slash"></span>
      <button class="layout-add" aria-label="New layout"><svg><use href="#i-plus"/></svg></button>
      <span class="slash"></span>
    </div>
    <div class="status-tools">
      <button class="st model">MODEL</button>
      <button class="st first" aria-label="Grid"><svg viewBox="0 0 14 14"><path class="s" d="M4 1v12M7.500 1v12M11 1v12M1 4h12M1 7.500h12M1 11h12"/></svg></button>
      <button class="st" aria-label="Snap"><svg viewBox="0 0 14 14"><path class="s" d="M2 3h12M2 7.500h12M2 12h12" stroke-width="2" stroke-dasharray="2 2.500"/></svg></button>
      <button class="st-drop" aria-label="Snap settings"><svg><use href="#i-caret"/></svg></button>
      <button class="st first" aria-label="Ortho"><svg viewBox="0 0 14 14"><path class="s" d="M1.500 1v12H14M1.500 9.500h4V13"/></svg></button>
      <button class="st" aria-label="Polar Tracking"><svg viewBox="0 0 14 14"><circle class="s" cx="6" cy="8" r="4.500"/><path class="s" d="M6 8h8M6 8l6-6"/></svg></button>
      <button class="st-drop" aria-label="Polar settings"><svg><use href="#i-caret"/></svg></button>
      <button class="st faded" aria-label="Isometric Drafting"><svg viewBox="0 0 14 14"><path class="s" d="M7 0v14M2 1l9 11"/><path d="M3 12l4-5" stroke="#6a9f7a"/></svg></button>
      <button class="st-drop" aria-label="Isoplane"><svg><use href="#i-caret"/></svg></button>
      <button class="st on" aria-label="Object Snap Tracking"><svg viewBox="0 0 14 14"><path class="s" d="M1 12L12 2M1 12h12" stroke-width="1.400"/></svg></button>
      <button class="st on" aria-label="Object Snap"><svg viewBox="0 0 14 14"><path class="s" d="M5 3h7v9H3V6" stroke-width="1.400"/><path class="s" d="M1 1h4v4H1z"/></svg></button>
      <button class="st-drop" aria-label="Object snap settings"><svg><use href="#i-caret"/></svg></button>
      <button class="st on" aria-label="Selection Cycling"><svg viewBox="0 0 14 14"><path class="f" d="M5 5h8v8H5z"/><path class="s" d="M3 9h1M3.500 4v-1h7M3 0v6M0 3h6"/></svg></button>
      <span class="st-gap"></span>
      <button class="st on" aria-label="Annotation Visibility"><svg viewBox="0 0 14 14"><path class="f" d="M6 0l2 6 3 7-5-3-5 3 3-7z"/><circle class="s" cx="11" cy="3" r="2"/></svg></button>
      <button class="st" aria-label="AutoScale"><svg viewBox="0 0 14 14"><path class="f" d="M6 0l2 6 3 7-5-3-5 3 3-7z"/><path class="s" d="M11 1v5M8.500 3.500h5"/></svg></button>
      <button class="st" aria-label="Annotation Scale"><svg viewBox="0 0 14 14"><path class="f" d="M7 0l2 6 3 7-5-3-5 3 3-7z"/></svg></button>
      <button class="st scale">1:1<svg><use href="#i-caret"/></svg></button>
      <button class="st first" aria-label="Workspace Switching"><svg><use href="#i-gear"/></svg></button>
      <button class="st-drop" aria-label="Workspaces"><svg><use href="#i-caret"/></svg></button>
      <button class="st wide first" aria-label="Annotation Monitor"><svg><use href="#i-plus"/></svg></button>
      <button class="st wide first" aria-label="Isolate Objects"><svg viewBox="0 0 14 14"><path class="s" d="M1 1h5v5H1z"/><circle class="s" cx="10.500" cy="5" r="2.500"/><path class="s" d="M6 9l3 4H3z"/></svg></button>
      <button class="st wide first" aria-label="Clean Screen"><svg viewBox="0 0 14 14"><path class="s" d="M1 2h12v10H1zM8 4h3v3M3 7v3h3"/></svg></button>
      <button class="st wide first" aria-label="Customization"><svg><use href="#i-burger"/></svg></button>
    </div>
  </div>

  <!-- Windows taskbar -->
  <footer class="taskbar">
    <div class="task-center">
      <button class="task start" aria-label="Start"><svg viewBox="0 0 18 18"><path d="M0 0h8.600v8.600H0zM9.400 0H18v8.600H9.400zM0 9.400h8.600V18H0zM9.400 9.400H18V18H9.400z" fill="#1a8fe0"/><path d="M0 0h8.600v8.600H0z" fill="#3fb4f0"/></svg></button>
      <label class="task-search">
        <svg viewBox="0 0 16 16"><circle cx="6.500" cy="6.500" r="5" fill="none" stroke="#222" stroke-width="1.500"/><path d="M10 10l4.500 4.500" stroke="#222" stroke-width="1.500"/></svg>
        <input type="text" placeholder="Search" aria-label="Search">
        <svg class="scene" viewBox="0 0 32 18"><path d="M1 14h30v3H1z" fill="#5a7f3a"/><path d="M10 11q6-6 12 0v5H10z" fill="#7fc4d8"/><path d="M12 10l4-4 4 4z" fill="#d89aa0"/><path d="M4 4l3 10H1zM8 0l4 14H5zM25 2l4 12h-7zM29 6l3 9h-6zM20 6l2 8h-4z" fill="#3c6b35"/><path d="M2 14h9M22 15h8" stroke="#6e4a2a" stroke-width="2"/></svg>
      </label>
      <button class="task" aria-label="Copilot"><svg viewBox="0 0 18 18"><path d="M5 1h6l2 5H8L6 13H2Q-1 12 1 7z" fill="#2a8fd8"/><path d="M13 17H7l-2-5h5l2-7h4q3 1 1 6z" fill="#e05a9a"/><path d="M2 9l3-1-1 6H2q-2-1 0-5z" fill="#7cc040"/><path d="M10 12l-5 0 2 5h4z" fill="#f0a030"/><path d="M12 5l4 0q2 2 0 6l-3-1z" fill="#a060e0"/></svg></button>
      <button class="task" aria-label="Premiere Pro"><svg viewBox="0 0 18 18"><rect width="18" height="18" rx="3" fill="#0a0050"/><text x="9" y="12" text-anchor="middle" font-size="9" font-weight="700" fill="#b9a0ff">Pr</text></svg></button>
      <button class="task run" aria-label="Edge"><svg viewBox="0 0 18 18"><circle cx="9" cy="9" r="9" fill="#1478c8"/><path d="M0 8Q2 0 9 0t9 8q0 4-5 4-3 0-2-3-1-4-5-4-4 0-6 3z" fill="#35c1b0"/><path d="M8 8q3-2 3 1-1 3 2 3 3 1 5-2-2 4-6 4-5-1-4-6z" fill="#eaf4ff"/></svg></button>
      <button class="task" aria-label="Inbox"><svg viewBox="0 0 18 18"><rect width="18" height="18" rx="3" fill="#fff"/><path d="M1 8h3v3H1z" fill="#e09090"/><path d="M5 8h3v3H5z" fill="#e8c070"/><circle cx="10.500" cy="9.500" r="1.500" fill="none" stroke="#d08080"/><path d="M13 8h4v3h-4z" fill="#e0a080"/></svg></button>
      <button class="task run" aria-label="Notes"><svg viewBox="0 0 18 18"><rect width="18" height="18" rx="4" fill="#5a3fc8"/><path d="M3 4h8M6 6.500h8M4 9h8M7 11.500h6M5 14h8" stroke="#e8e0ff" stroke-width="1.800"/></svg></button>
      <button class="task run" aria-label="Chrome"><svg viewBox="0 0 18 18"><circle cx="9" cy="9" r="9" fill="#f6c62c"/><path d="M9 9L1.200 4.500Q4 0 9 0t7.800 4.500z" fill="#d93a30"/><path d="M9 9L1.200 4.500Q-1 9 1.500 13.500T9 18z" fill="#2f9e4c"/><circle cx="9" cy="9" r="4.300" fill="#fff"/><circle cx="9" cy="9" r="3.300" fill="#3c7ee8"/></svg></button>
      <button class="task" aria-label="SE"><svg viewBox="0 0 18 18"><rect width="18" height="18" rx="3" fill="#c22a2e"/><text x="9" y="13" text-anchor="middle" font-size="11" font-weight="700" fill="#fff">SE</text></svg></button>
      <button class="task run" aria-label="Zalo"><svg viewBox="0 0 18 18"><circle cx="8.500" cy="9" r="8.500" fill="#1a60d8"/><rect x="1" y="0" width="17" height="17" rx="7" fill="#fff"/><text x="10" y="11" text-anchor="middle" font-size="7" font-weight="700" fill="#1a60d8">Zalo</text></svg></button>
      <button class="task run" aria-label="Telegram"><svg viewBox="0 0 18 18"><circle cx="9" cy="9" r="8.500" fill="#2596c4"/><path d="M3.500 9L14 4.500 12 13.500 8.500 11 7 12.500V10z" fill="#fff"/></svg></button>
      <button class="task run" aria-label="Remote Desktop"><svg viewBox="0 0 18 18"><circle cx="9" cy="9" r="9" fill="#2c74c8"/><path d="M4 5h11l-1 8H8l-3 1 1-2H4z" fill="#fff"/><path d="M6 10l7-4-2 5z" fill="#2c74c8"/></svg></button>
      <button class="task run" aria-label="File Explorer"><svg viewBox="0 0 18 18"><path d="M0 2h7l2 2h9v12H0z" fill="#e0a020"/><path d="M0 5h18v11H0z" fill="#ffd458"/><path d="M4 12h10v5H4z" fill="#2070b8"/></svg></button>
      <button class="task run" aria-label="To Do"><svg viewBox="0 0 18 18"><path d="M0 10l3-3 4 4L14 3l4 3L7 17z" fill="#3a86e0"/><path d="M0 10l3-3 4 4-3 3z" fill="#1c55a8"/></svg><span class="badge">2</span></button>
      <button class="task run" aria-label="Notepad"><svg viewBox="0 0 18 18"><path d="M2 1h14v15H2z" fill="#38b0c8"/><path d="M4 5h10M4 8h10M4 11h10" stroke="#0f5f78" stroke-width="1.200"/><path d="M3 0v3M6 0v3M9 0v3M12 0v3M15 0v3" stroke="#24505c"/><path d="M2 15h14v2H2z" fill="#a89878"/></svg></button>
      <button class="task run" aria-label="SketchUp"><svg viewBox="0 0 18 18"><path d="M0 0h18v18H0z" fill="#dcebf6"/><path d="M9 3q6 0 6 6t-6 6l-5-3 1-1 4 2V9L4 7q1-4 5-4zM9 7l4-1v5l-3 2" fill="none" stroke="#0f5a90" stroke-width="1.500"/></svg></button>
      <button class="task run" aria-label="Enscape"><svg viewBox="0 0 18 18"><path d="M0 0h18v18H0z" fill="#c81e28"/><path d="M9 2.500v13M3 6l12 6M3 12.500l12-7M5 3.500l8 11" stroke="#fff" stroke-width="1.700"/><circle cx="9" cy="9" r="2" fill="#c81e28"/></svg></button>
      <button class="task run" aria-label="Nitro PDF"><svg viewBox="0 0 18 18"><path d="M0 0h18v18H0z" fill="#e04a1c"/><path d="M4 16V8q1-5 5-6v9q-1 4-5 5zM10 12V4q1-2 4-2v8q-1 4-4 5z" fill="#fff"/></svg></button>
      <button class="task run focus" aria-label="AutoCAD"><svg viewBox="0 0 18 18"><path d="M1 2l2-2h14v18H3l-2-2z" fill="#d81650"/><path d="M3 12h14v6H3z" fill="#6a0a2a"/><path d="M6.500 10.500L10 2l3.500 8.500M8 8h4" fill="none" stroke="#fff" stroke-width="1.600"/><path d="M6 15h8" stroke="#e8b0c0" stroke-width="1.500"/></svg></button>
    </div>
    <div class="tray">
      <button class="tray-btn" aria-label="Hidden icons"><svg viewBox="0 0 12 12"><path d="M2 8l4-4 4 4" fill="none" stroke="#222" stroke-width="1.200"/></svg></button>
      <button class="tray-btn" aria-label="Recorder"><svg viewBox="0 0 12 12"><circle cx="6" cy="6" r="5" fill="#d03030" stroke="#2a0d0d" stroke-width="1.600"/></svg></button>
      <button class="tray-btn" aria-label="UniKey"><svg viewBox="0 0 12 12"><path d="M.5.5h11v11H.5z" fill="#f4d0cc" stroke="#c07a76"/><path d="M3 2.500l3 7 3-7" fill="none" stroke="#b02020" stroke-width="1.800"/></svg></button>
      <button class="tray-btn" aria-label="Microphone"><svg viewBox="0 0 12 12"><rect x="4" y="0" width="4" height="7" rx="2" fill="#9cc4ea" stroke="#3a78b4"/><path d="M2 5q0 4 4 4t4-4M6 9v3" fill="none" stroke="#3a78b4"/></svg></button>
      <button class="lang">ENG</button>
      <button class="quick-settings" aria-label="Network, volume, battery">
        <svg viewBox="0 0 14 12"><path d="M9 1.500H1.500v7h8V6M3 11h6M5.500 9v2M10.500.5h3v4h-3zM12 4.500V8q0 2-2 2" fill="none" stroke="#222"/></svg>
        <svg viewBox="0 0 14 12"><path d="M1 4h2l3-3v10L3 8H1zM8 4q1.500 2 0 4M10 2.500q2.500 3.500 0 7M12 1q3 5 0 10" fill="none" stroke="#222"/></svg>
        <svg viewBox="0 0 14 12"><path d="M1 3h8v7H1z" fill="#222"/><path d="M0 1l3 3M9 3l4-1M13 5v6" stroke="#222" stroke-width="1.400"/><circle cx="10.500" cy="8" r="3" fill="#222"/></svg>
      </button>
      <button class="clock"><span>11:56 AM</span><span>4/19/2025</span></button>
    </div>
  </footer>

</body>
</html>
```

FILE: styles.css
```css
/* Page */
* {
  box-sizing: border-box;
}
body {
  margin: 0;
  height: 100vh;
  display: flex;
  flex-direction: column;
  overflow: hidden;
  background-color: #222a33;
  color: #d6dae0;
  font-family: Roboto, "Noto Sans", sans-serif;
  font-size: 9px;
  line-height: 12px;
}
button, input, select {
  font: inherit;
  color: inherit;
  background: none;
  border: none;
  margin: 0;
  padding: 0;
}
button {
  display: flex;
  align-items: center;
  justify-content: center;
  flex: none;
  white-space: nowrap;
}
svg {
  display: block;
  flex: none;
}
.icon-defs {
  position: absolute;
  width: 0;
  height: 0;
}
/* Icon paint: filled, stroked, blue stroked */
.f {
  fill: #d6dae0;
}
.s {
  fill: none;
  stroke: #d6dae0;
}
.b {
  fill: none;
  stroke: #7db7e8;
}

/* Title bar */
.title-bar {
  display: flex;
  align-items: center;
  height: 21px;
  flex: none;
}
.quick-access, .info-center, .window-buttons {
  display: flex;
  align-items: center;
  height: 100%;
}
.app-button {
  margin-left: 11px;
}
.app-button svg {
  width: 18px;
  height: 15px;
}
.tool {
  width: 18px;
  height: 18px;
}
.tool svg {
  width: 13px;
  height: 13px;
}
.drop {
  width: 13px;
  height: 18px;
}
.drop svg {
  width: 6px;
  height: 12px;
}
.drop.small {
  width: 9px;
}
.drop.small svg {
  width: 4px;
}
.drop.wide {
  width: 14px;
}
.dim {
  opacity: 0.4;
}
.share {
  gap: 3px;
  margin-left: 1px;
  font-size: 10px;
  color: #8fb8dc;
}
.share svg {
  width: 12px;
  height: 12px;
}
.title-text {
  flex: 1;
  display: flex;
  justify-content: center;
  gap: 9px;
}
.info-search {
  width: 134px;
  height: 15px;
  padding: 0 2px;
  background-color: #434e63;
  font-style: italic;
}
.info-search::placeholder {
  color: #b4bac6;
  opacity: 1;
}
.sign-in {
  width: 90px;
  gap: 3px;
  padding: 0 3px;
  justify-content: flex-start;
}
.sign-in svg {
  width: 13px;
  height: 12px;
}
.sign-in .tiny {
  width: 4px;
  margin-left: auto;
}
.bar {
  width: 1px;
  height: 13px;
  margin: 0 4px;
  background-color: #414a56;
}
.window-buttons {
  margin-left: 45px;
}
.window-buttons button {
  width: 35px;
  height: 20px;
}
.window-buttons svg, .doc-buttons svg {
  width: 9px;
  height: 9px;
}

/* Menu bar */
.menu-bar {
  display: flex;
  align-items: center;
  gap: 18px;
  height: 16px;
  flex: none;
  padding-left: 10px;
  border-bottom: 1px solid #3a424d;
  color: #a9afb9;
}
.doc-buttons {
  display: flex;
  margin-left: auto;
}
.doc-buttons button {
  width: 24px;
  height: 14px;
}

/* File tabs */
.file-tabs {
  display: flex;
  align-items: center;
  height: 20px;
  flex: none;
  padding-left: 12px;
}
.burger svg {
  width: 12px;
  height: 11px;
}
.slash {
  width: 1px;
  height: 12px;
  margin: 0 8px 0 9px;
  background-color: #4a525e;
  transform: skewX(-20deg);
}
.file-tab-active {
  display: flex;
  align-items: center;
  height: 17px;
  gap: 9px;
  margin-left: 8px;
  padding: 0 9px 0 13px;
  background-color: #3d4454;
  clip-path: polygon(6px 0, 100% 0, calc(100% - 8px) 100%, 0 100%);
  font-weight: 700;
  color: #e4e7ec;
}
.tab-close svg {
  width: 7px;
  height: 7px;
}
.tab-add svg {
  width: 11px;
  height: 11px;
}
.tab-add {
  margin-left: 6px;
}

/* Toolbars */
.toolbars {
  flex: none;
  height: 43px;
  padding-top: 1px;
  background-color: #3d4454;
}
.toolbar {
  display: flex;
  align-items: center;
  height: 20px;
}
.grip {
  width: 3px;
  height: 11px;
  margin: 0 3px;
  background-color: #59616f;
}
.grip:first-child {
  margin-left: 2px;
}
.btn {
  width: 17px;
  height: 18px;
}
.btn svg {
  width: 13px;
  height: 13px;
}
.btn-drop {
  width: 10px;
  height: 18px;
}
.btn-drop svg {
  width: 7px;
  height: 12px;
}
.sep {
  width: 1px;
  height: 14px;
  margin: 0 2px;
  background-color: #2a303c;
}
.combo {
  display: flex;
  align-items: center;
  flex: none;
  height: 17px;
  padding: 0 5px 0 2px;
  background-color: #fff;
  color: #222;
}
.combo select {
  appearance: none;
  flex: 1;
  min-width: 0;
  height: 100%;
  padding-left: 3px;
  opacity: 1;
}
.combo select.indent {
  padding-left: 5px;
}
.arrow {
  width: 7px;
  height: 5px;
  color: #555;
}
.combo.off {
  color: #909090;
}
.combo.off .arrow {
  color: #bbb;
}
.gap {
  margin-right: 4px;
}
.w-style {
  width: 90px;
}
.w-workspace {
  width: 129px;
}
.w-layer {
  width: 225px;
}
.w-color {
  width: 112px;
}
.w-ltype {
  width: 120px;
}
.w-lweight {
  width: 94px;
}
.state {
  width: 11px;
  height: 11px;
  margin: 0 1px 0 2px;
}
.swatch {
  width: 10px;
  height: 10px;
  margin: 0 1px 0 2px;
  background-color: #7300e6;
}
.sample {
  width: 26px;
  height: 1px;
  margin: 0 3px 0 2px;
  background-color: #333;
}
.sample.long {
  width: 45px;
}

/* Workspace */
.workspace {
  flex: 1;
  display: flex;
  min-height: 0;
  background-color: #3d4454;
}
.side {
  flex: none;
}
.side-left {
  width: 22px;
}
.side-right {
  width: 24px;
}
.side-bar {
  display: flex;
  flex-direction: column;
  width: 18px;
  padding-top: 7px;
  border: 1px solid #2c3444;
  background-color: #3b4355;
}
.side-right .side-bar {
  margin-left: 3px;
}
.side-bar::before {
  content: "";
  width: 10px;
  height: 2px;
  margin: -5px auto 3px;
  background-color: #5d6675;
}
.draw-bar {
  height: 339px;
}
.modify-bar {
  height: 306px;
}
.side-bar button {
  flex: 1;
  min-height: 0;
}
.side-bar svg {
  width: 13px;
  height: 13px;
}

/* Drawing canvas */
.canvas {
  position: relative;
  flex: 1;
  min-width: 0;
  margin-bottom: 3px;
  background-color: #000;
  overflow: hidden;
}
.drawing {
  width: 100%;
  height: 100%;
  fill: none;
}
.sheet {
  stroke: #a88886;
  stroke-width: 3;
}
.part {
  stroke: #2e0f66;
  stroke-width: 2;
}
.part-edge {
  stroke: #5f2f86;
  stroke-width: 1;
}
.sheet-name {
  font-family: "Liberation Sans", sans-serif;
  font-size: 66px;
  stroke: #5a0c14;
  stroke-width: 1;
}
.hole {
  stroke: #8f8f72;
  stroke-width: 1.4;
}
.selected {
  stroke: #3b36a6;
  stroke-width: 3;
}
.grips {
  fill: #0a80fa;
}
.cross-h {
  stroke: #78807c;
  stroke-width: 2;
}
.cross-v {
  stroke: #b4b4b4;
}
.pick {
  stroke: #e0e0e0;
}
.ucs {
  stroke: #c4c4c4;
}
.view-label {
  position: absolute;
  top: 5px;
  left: 2px;
  display: flex;
  gap: 1px;
  color: #c8c8c8;
}

/* View cube */
.view-cube {
  position: absolute;
  top: 9px;
  right: 8px;
  display: grid;
  grid-template-columns: 24px 60px 24px;
  grid-template-rows: 24px 60px 24px;
  place-items: center;
  font-family: "Liberation Sans", sans-serif;
  font-size: 16px;
  line-height: 16px;
  font-weight: 700;
  color: #b8b8b8;
}
.view-cube::before {
  content: "";
  position: absolute;
  inset: 9px;
  border: 9px solid rgba(90, 90, 90, 0.5);
  border-radius: 50%;
}
.view-cube span, .view-cube button {
  position: relative;
}
.north, .south {
  grid-column: 2;
}
.west {
  grid-column: 1;
}
.south {
  grid-row: 3;
}
.cube-face {
  width: 39px;
  height: 39px;
  background-color: #b0b0b0;
  font-size: 10px;
  color: #3c3e44;
}
.cube-face span {
  width: 25px;
  line-height: 25px;
  background-color: #9fa1a9;
}
.wcs {
  position: absolute;
  top: 127px;
  right: 45px;
  width: 35px;
  height: 13px;
  justify-content: flex-start;
  padding-left: 3px;
  border-radius: 3px;
  background-color: #84848e;
  font-family: "Liberation Sans", sans-serif;
  color: #45454d;
}
.nav-bar {
  position: absolute;
  top: 160px;
  right: 3px;
  width: 24px;
  height: 159px;
  border-radius: 3px;
  background-color: #3f3f3f;
}

/* Command line */
.command {
  position: absolute;
  left: 170px;
  right: 171px;
  bottom: 1px;
  font-family: "DejaVu Sans Mono", monospace;
}
.command-log {
  display: flex;
  flex-direction: column;
  align-items: flex-start;
  gap: 4px;
  padding: 0 0 2px 48px;
}
.command-log span {
  padding: 0 1px;
  line-height: 11px;
  border-radius: 1px;
  background-color: #606060;
  color: #e8e8e8;
}
.command-log .older {
  background-color: #444;
  color: #b4b4b4;
}
.command-bar {
  display: flex;
  height: 19px;
}
.command-tools {
  display: flex;
  align-items: center;
  width: 44px;
  padding: 0 4px 0 3px;
  background-color: #262b38;
}
.dots {
  width: 5px;
  height: 13px;
  background-image: repeating-linear-gradient(#262b38 0 1px, transparent 1px 2px), repeating-linear-gradient(90deg, #9aa0aa 0 1px, transparent 1px 2px);
}
.command-close {
  margin-left: 4px;
}
.command-custom {
  margin-left: auto;
}
.command-close svg {
  width: 7px;
  height: 7px;
}
.command-custom svg {
  width: 11px;
  height: 11px;
}
.command-input {
  flex: 1;
  display: flex;
  align-items: center;
  padding: 0 1px 0 2px;
  background-color: #b1b1b1;
}
.command-input input {
  flex: 1;
  min-width: 0;
  padding-left: 5px;
  font-style: italic;
}
.command-input input::placeholder {
  color: #5c5c5c;
  opacity: 1;
}
.prompt {
  width: 20px;
  height: 12px;
}
.up {
  width: 8px;
  height: 6px;
}

/* Status bar */
.status-bar {
  display: flex;
  justify-content: space-between;
  flex: none;
  height: 22px;
  border-bottom: 1px solid #4a4f5c;
}
.layout-tabs, .status-tools {
  display: flex;
  align-items: center;
  height: 19px;
}
.layout-tabs {
  padding-left: 12px;
  font-size: 10px;
}
.layout-tab {
  height: 18px;
  padding: 0 0 0 5px;
}
.layout-tab.current {
  margin-left: 7px;
  padding: 0 12px;
  background-color: #3d4454;
  clip-path: polygon(8px 0, 100% 0, calc(100% - 8px) 100%, 0 100%);
  font-weight: 700;
  color: #fff;
}
.layout-tabs .slash {
  margin: 0 8px 0 6px;
}
.layout-add svg {
  width: 11px;
  height: 11px;
}
.status-tools {
  background-color: #343c4a;
}
.st {
  width: 18px;
  height: 18px;
}
.st svg {
  width: 13px;
  height: 13px;
}
.st.first {
  border-left: 1px solid #20262f;
}
.st.model {
  width: 37px;
  font-size: 10px;
}
.st.on {
  width: 17px;
  margin-right: 1px;
  background-color: #5587bd;
}
.st.wide {
  width: 20px;
}
.st.scale {
  width: 27px;
  gap: 2px;
}
.faded svg {
  opacity: 0.6;
}
.st-drop {
  width: 13px;
  height: 18px;
}
.st-drop svg, .st.scale svg {
  width: 6px;
  height: 11px;
}
.st-gap {
  width: 2px;
}

/* Taskbar */
.taskbar {
  position: relative;
  display: flex;
  justify-content: center;
  flex: none;
  height: 35px;
  padding-left: 4px;
  background-image: linear-gradient(90deg, #dfe9f5 0%, #dfe8f5 19%, #d2dcf6 24%, #d6dcf3 40%, #d5daf1 76%, #dde6f5 84%, #dfe8f5 100%);
  color: #222;
}
.task-center {
  display: flex;
  align-items: center;
}
.task {
  position: relative;
  width: 28px;
  height: 29px;
  margin: 0 5px 0 0;
  border-radius: 3px;
}
.task.start {
  margin-right: 4px;
}
.task svg {
  width: 18px;
  height: 18px;
}
.task.run::after {
  content: "";
  position: absolute;
  bottom: 0;
  left: 12px;
  width: 4px;
  height: 2px;
  border-radius: 1px;
  background-color: #7c8090;
}
.task.focus {
  background-color: #eceffa;
}
.task.focus::after {
  left: 9px;
  width: 10px;
  background-color: #1a6fb0;
}
.badge {
  position: absolute;
  top: 1px;
  right: 2px;
  width: 12px;
  height: 12px;
  border-radius: 50%;
  background-color: #1668a8;
  color: #fff;
  font-size: 9px;
}
.task-search {
  display: flex;
  align-items: center;
  width: 163px;
  height: 23px;
  margin-right: 5px;
  padding: 0 4px 0 8px;
  border-radius: 12px;
  background-color: #f3f6fd;
  font-size: 12px;
}
.task-search svg {
  width: 12px;
  height: 12px;
}
.task-search .scene {
  width: 32px;
  height: 18px;
}
.task-search input {
  flex: 1;
  min-width: 0;
  padding-left: 8px;
}
.task-search input::placeholder {
  color: #555a64;
  opacity: 1;
}
.tray {
  position: absolute;
  top: 0;
  right: 15px;
  height: 35px;
  display: flex;
  align-items: center;
}
.tray-btn {
  width: 24px;
  height: 24px;
}
.tray-btn svg {
  width: 11px;
  height: 11px;
}
.lang {
  width: 32px;
}
.quick-settings {
  gap: 5px;
  margin-left: 5px;
}
.quick-settings svg {
  width: 13px;
  height: 12px;
}
.clock {
  flex-direction: column;
  align-items: flex-end;
  width: 54px;
  font-size: 10px;
}
```
